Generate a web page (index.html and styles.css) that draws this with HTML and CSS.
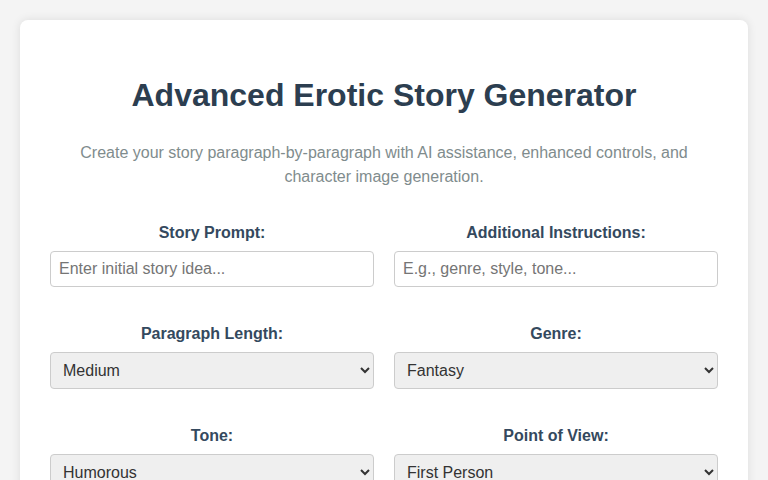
FILE: index.html
```html
<!DOCTYPE html>
<html lang="en">
<head>
<meta charset="utf-8">
<title>Advanced Erotic Story Generator</title>
<link rel="stylesheet" href="styles.css">
</head>
<body>
<div class="card">
  <h1 class="title">Advanced Erotic Story Generator</h1>
  <p class="subtitle">Create your story paragraph-by-paragraph with AI assistance, enhanced controls, and character image generation.</p>
  <div class="form-grid">
    <div class="group">
      <label class="label" for="prompt">Story Prompt:</label>
      <input class="field input" id="prompt" type="text" placeholder="Enter initial story idea...">
    </div>
    <div class="group">
      <label class="label" for="instr">Additional Instructions:</label>
      <input class="field input" id="instr" type="text" placeholder="E.g., genre, style, tone...">
    </div>
    <div class="group">
      <label class="label" for="len">Paragraph Length:</label>
      <select class="field select" id="len">
        <option>Short</option>
        <option selected>Medium</option>
        <option>Long</option>
      </select>
    </div>
    <div class="group">
      <label class="label" for="genre">Genre:</label>
      <select class="field select" id="genre">
        <option selected>Fantasy</option>
        <option>Romance</option>
        <option>Sci-Fi</option>
      </select>
    </div>
    <div class="group">
      <label class="label" for="tone">Tone:</label>
      <select class="field select" id="tone">
        <option selected>Humorous</option>
        <option>Serious</option>
      </select>
    </div>
    <div class="group">
      <label class="label" for="pov">Point of View:</label>
      <select class="field select" id="pov">
        <option selected>First Person</option>
        <option>Third Person</option>
      </select>
    </div>
  </div>
</div>
</body>
</html>
```
FILE: styles.css
```css
* { box-sizing: border-box; }
html, body { margin: 0; }
body {
  background: #f4f4f4;
  font-family: "Liberation Sans", Arial, sans-serif;
  padding: 20px;
}
.card {
  background: #fff;
  border-radius: 8px;
  box-shadow: 0 0 10px rgba(0,0,0,0.1);
  padding: 30px 30px 40px;
}
.title {
  margin: 27px 0 0;
  font-size: 32px;
  line-height: 37px;
  font-weight: bold;
  color: #2c3e50;
  text-align: center;
}
.subtitle {
  margin: 27px 0 0;
  font-size: 16px;
  line-height: 24px;
  color: #7f8c8d;
  text-align: center;
}
.form-grid {
  margin-top: 35px;
  display: grid;
  grid-template-columns: 1fr 1fr;
  column-gap: 20px;
  row-gap: 38px;
}
.group {
  display: flex;
  flex-direction: column;
}
.label {
  display: block;
  text-align: center;
  font-weight: bold;
  font-size: 16px;
  line-height: 18px;
  color: #34495e;
  margin-bottom: 9px;
}
.field {
  width: 100%;
  font-family: "Liberation Sans", Arial, sans-serif;
  font-size: 16px;
  padding: 8px;
  border: 1px solid #ccc;
  border-radius: 4px;
  color: #333;
}
.field::placeholder { color: #757575; }
.input {
  height: 36px;
}
.select {
  height: 37px;
}
```
